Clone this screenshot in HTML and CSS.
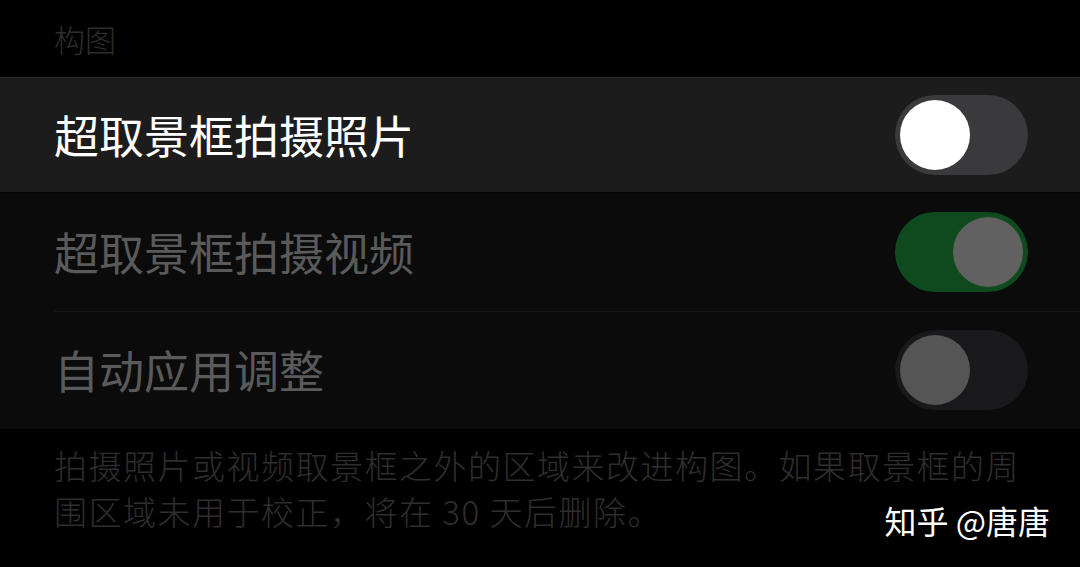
FILE: index.html
```html
<!DOCTYPE html>
<html lang="zh-CN">
<head>
  <meta charset="UTF-8" />
  <title>构图</title>
  <link rel="stylesheet" href="styles.css">
</head>
<body>
  <div class="screen">
    <div class="section-title">构图</div>

    <div class="group">
      <div class="row row-active">
        <span class="label">超取景框拍摄照片</span>
        <span class="switch switch-off-light"><span class="knob"></span></span>
      </div>
      <div class="row row-dim">
        <span class="label">超取景框拍摄视频</span>
        <span class="switch switch-on"><span class="knob"></span></span>
      </div>
      <div class="row row-dim">
        <span class="label">自动应用调整</span>
        <span class="switch switch-off-dim"><span class="knob"></span></span>
      </div>
    </div>

    <p class="footnote">拍摄照片或视频取景框之外的区域来改进构图。如果取景框的周围区域未用于校正，将在 30 天后删除。</p>

    <div class="watermark">知乎 @唐唐</div>
  </div>
</body>
</html>
```

FILE: styles.css
```css
* {
  box-sizing: border-box;
  margin: 0;
  padding: 0;
}

body {
  background: #000;
  font-family: "Noto Sans CJK SC", "Noto Sans", sans-serif;
  width: 1080px;
  height: 567px;
  overflow: hidden;
}

.screen {
  position: relative;
  height: 567px;
}

.section-title {
  height: 77px;
  padding: 17px 54px 0;
  font-size: 31px;
  line-height: 44px;
  font-weight: 300;
  color: #2d2d2d;
}

.group {
  border-top: 1px solid #2a2a2a;
}

.row {
  display: flex;
  align-items: center;
  justify-content: space-between;
  padding: 0 52px 0 54px;
  height: 118px;
  background: #0b0b0b;
  position: relative;
}

.row + .row::before {
  content: "";
  position: absolute;
  top: 0;
  left: 54px;
  right: 0;
  border-top: 1px solid #161617;
}

.row-active {
  height: 115px;
  background: #1c1c1c;
  border-bottom: 1px solid #060606;
}

.row-active + .row::before {
  display: none;
}

.label {
  font-size: 45px;
  line-height: 56px;
  color: #5a5a5a;
}

.row-active .label {
  color: #fff;
}

.switch {
  display: flex;
  align-items: center;
  width: 133px;
  height: 80px;
  border-radius: 40px;
  padding: 0 5px;
}

.knob {
  width: 70px;
  height: 70px;
  border-radius: 50%;
}

.switch-off-light {
  background: #3a3a3c;
}

.switch-off-light .knob {
  background: #fff;
}

.switch-on {
  background: #0f4a1f;
  justify-content: flex-end;
}

.switch-on .knob {
  background: #616161;
}

.switch-off-dim {
  background: #19191b;
}

.switch-off-dim .knob {
  background: #555;
}

.footnote {
  padding: 13px 54px 0;
  font-size: 33px;
  line-height: 46px;
  letter-spacing: 1.5px;
  font-weight: 300;
  color: #2e2e2e;
}

.watermark {
  position: absolute;
  right: 30px;
  bottom: 27px;
  font-size: 32px;
  line-height: 40px;
  color: #fff;
}
```
